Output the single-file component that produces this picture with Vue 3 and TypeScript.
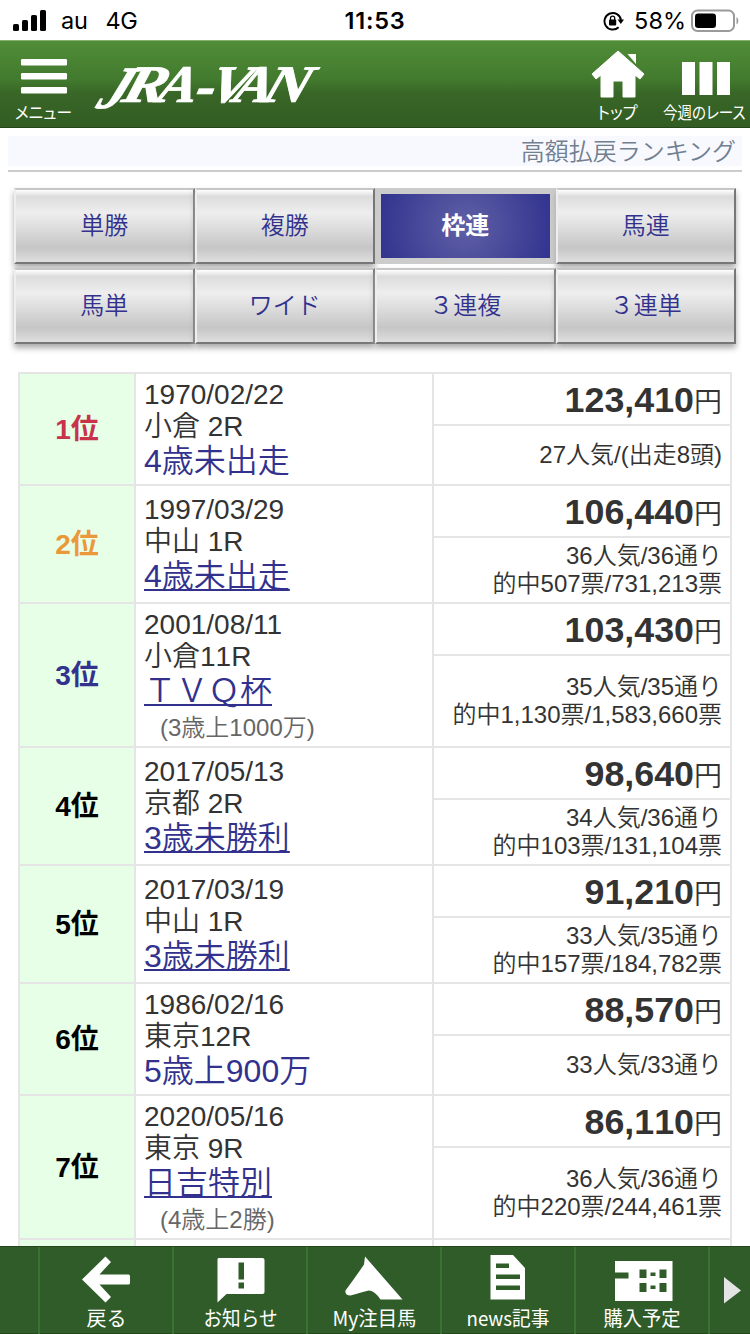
<script setup lang="ts">
interface Row {
  rank: number
  date: string
  place: string
  race: string
  link: boolean
  note?: string
  amount: string
  info: string[]
  size: 'short' | 'medium' | 'tall'
}

const tabs: string[] = ['単勝', '複勝', '枠連', '馬連', '馬単', 'ワイド', '３連複', '３連単']
const activeTab = '枠連'

const rows: Row[] = [
  { rank: 1, date: '1970/02/22', place: '小倉 2R', race: '4歳未出走', link: false, amount: '123,410', info: ['27人気/(出走8頭)'], size: 'short' },
  { rank: 2, date: '1997/03/29', place: '中山 1R', race: '4歳未出走', link: true, amount: '106,440', info: ['36人気/36通り', '的中507票/731,213票'], size: 'medium' },
  { rank: 3, date: '2001/08/11', place: '小倉11R', race: 'ＴＶＱ杯', link: true, note: '(3歳上1000万)', amount: '103,430', info: ['35人気/35通り', '的中1,130票/1,583,660票'], size: 'tall' },
  { rank: 4, date: '2017/05/13', place: '京都 2R', race: '3歳未勝利', link: true, amount: '98,640', info: ['34人気/36通り', '的中103票/131,104票'], size: 'medium' },
  { rank: 5, date: '2017/03/19', place: '中山 1R', race: '3歳未勝利', link: true, amount: '91,210', info: ['33人気/35通り', '的中157票/184,782票'], size: 'medium' },
  { rank: 6, date: '1986/02/16', place: '東京12R', race: '5歳上900万', link: false, amount: '88,570', info: ['33人気/33通り'], size: 'short' },
  { rank: 7, date: '2020/05/16', place: '東京 9R', race: '日吉特別', link: true, note: '(4歳上2勝)', amount: '86,110', info: ['36人気/36通り', '的中220票/244,461票'], size: 'tall' },
]
</script>

<template>
  <div class="screen">
    <div class="status">
      <div class="status-left">
        <svg class="signal" width="34" height="21" viewBox="0 0 34 21">
          <rect x="0" y="14" width="6" height="7" rx="1.6" />
          <rect x="9" y="10" width="6" height="11" rx="1.6" />
          <rect x="18" y="5" width="6" height="16" rx="1.6" />
          <rect x="27" y="0" width="6" height="21" rx="1.6" />
        </svg>
        <span class="carrier">au</span>
        <span class="network">4G</span>
      </div>
      <div class="clock">11:53</div>
      <div class="status-right">
        <svg width="21" height="20" viewBox="0 0 21 20">
          <path d="M15.600 16.200A8.300 8.300 0 1 1 18 9" fill="none" stroke="#000" stroke-width="1.900" />
          <path d="M14.600 8.600h6.400l-3.200 4.400z" />
          <rect x="6" y="8.600" width="7.200" height="5.800" rx="1" />
          <path d="M7.500 9V7.200a2.100 2.100 0 0 1 4.200 0V9" fill="none" stroke="#000" stroke-width="1.300" />
        </svg>
        <span class="percent">58%</span>
        <svg width="48" height="24" viewBox="0 0 48 24">
          <rect x="1" y="1.500" width="42" height="20.500" rx="5.500" fill="none" stroke="#9a9a9a" stroke-width="2" />
          <rect x="4" y="4.500" width="21" height="14.500" rx="3.200" />
          <path d="M45.500 8v7.500c2.400-1.400 2.400-6.100 0-7.500z" fill="#9a9a9a" />
        </svg>
      </div>
    </div>

    <header class="header">
      <svg class="menu" width="88" height="86" viewBox="0 0 88 86">
        <rect x="21" y="18" width="46" height="6.500" rx="1.200" />
        <rect x="21" y="32" width="46" height="6.500" rx="1.200" />
        <rect x="21" y="46" width="46" height="6.500" rx="1.200" />
        <text x="15" y="77.500" font-size="17" textLength="57" lengthAdjust="spacingAndGlyphs">メニュー</text>
      </svg>
      <svg class="logo" width="240" height="86" viewBox="0 0 240 86">
        <g transform="translate(0 61) skewX(-13)">
          <text class="logo-text" transform="translate(8 5.500) skewX(-12) scale(.95 1)" font-size="60">J</text>
          <text class="logo-text" transform="translate(32 0) skewX(-4) scale(1.24 1)" font-size="53">R</text>
          <text class="logo-text" transform="translate(68 0) scale(1.1 1)" font-size="53">A</text>
          <text class="logo-text" transform="translate(106 3) scale(1.08 1.1)" font-size="53">-</text>
          <text class="logo-text" transform="translate(118 0) skewX(-4) scale(1.14 1)" font-size="53">V</text>
          <text class="logo-text" transform="translate(144 0) scale(1.1 1)" font-size="53">A</text>
          <text class="logo-text" transform="translate(172 0) skewX(-7) scale(1.2 1)" font-size="53">N</text>
        </g>
      </svg>
      <svg class="home" width="82" height="86" viewBox="0 0 82 86">
        <path d="M38 10 64 33l-4 5-5-4v22H43V40H33v16H21V34l-5 4-4-5z" stroke="#fff" stroke-width="1" stroke-linejoin="round" />
        <path d="M47.500 13h8.500v10z" />
        <text x="17.500" y="77.500" font-size="17" textLength="40" lengthAdjust="spacingAndGlyphs">トップ</text>
      </svg>
      <svg class="races" width="90" height="86" viewBox="0 0 90 86">
        <rect x="22" y="21" width="13" height="33" />
        <rect x="39.500" y="21" width="13" height="33" />
        <rect x="57" y="21" width="13" height="33" />
        <text x="3" y="77.500" font-size="17" textLength="82.500" lengthAdjust="spacingAndGlyphs">今週のレース</text>
      </svg>
    </header>

    <h1 class="title">高額払戻ランキング</h1>

    <nav class="tabs">
      <div v-for="tab in tabs" :key="tab" class="tab" :class="{ active: tab === activeTab }">
        <span>{{ tab }}</span>
      </div>
    </nav>

    <section class="ranking">
      <div v-for="row in rows" :key="row.rank" class="row" :class="row.size">
        <div class="rank" :class="'rank-' + row.rank">{{ row.rank }}位</div>
        <div class="race">
          <div class="date">{{ row.date }}</div>
          <div class="place">{{ row.place }}</div>
          <div class="name"><span :class="{ link: row.link }">{{ row.race }}</span></div>
          <div v-if="row.note" class="note">{{ row.note }}</div>
        </div>
        <div class="payout">
          <div class="amount"><b>{{ row.amount }}</b>円</div>
          <div class="info">
            <div v-for="line in row.info" :key="line">{{ line }}</div>
          </div>
        </div>
      </div>
      <div class="row short">
        <div class="rank"></div>
        <div class="race"></div>
        <div class="payout"></div>
      </div>
    </section>

    <footer class="bottom">
      <div class="edge"></div>
      <svg class="item" viewBox="-1.500 0.500 134 87">
        <path d="M42.500 33 66 10l5.500 5.500L60 28h29q1.500 0 1.500 1.500v7q0 1.500-1.500 1.500H60L71.500 50.500 66 56z" />
        <text x="47" y="79.500" font-size="20" textLength="40" lengthAdjust="spacingAndGlyphs">戻る</text>
      </svg>
      <svg class="item" viewBox="-1.500 0.500 134 87">
        <path fill-rule="evenodd" d="M45 11.500h44q2 0 2 2v32q0 2-2 2H53L44 56V13q0-1.500 1-1.500zM65 16h5.500v17H65zM65 36h5.500v6H65z" />
        <text x="30" y="79.500" font-size="20" textLength="74" lengthAdjust="spacingAndGlyphs">お知らせ</text>
      </svg>
      <svg class="item" viewBox="-1.500 0.500 134 87">
        <path d="M57.500 10 95 53H73q-6-9-12-9-4 1-18 5-6 0-5-5Q47 32 56.500 18z" />
        <text x="25" y="79.500" font-size="20" textLength="84" lengthAdjust="spacingAndGlyphs">My注目馬</text>
      </svg>
      <svg class="item" viewBox="-1.500 0.500 134 87">
        <path fill-rule="evenodd" d="M49 8.500H71.500l12 13v31.500H49zM54.500 17v4.500h13V17zM54.500 28v4.500h24V28zM54.500 39v4.500h24V39z" />
        <text x="25" y="79.500" font-size="20" textLength="83" lengthAdjust="spacingAndGlyphs">news記事</text>
      </svg>
      <svg class="item" viewBox="-1.500 0.500 134 87">
        <path fill-rule="evenodd" d="M39.500 14.500H97v40H39.500V32H53v-6H39.500zM64 23v8.500h7V23zM84 23v8.500h7V23zM64 36.500v9h7v-9zM84 36.500v9h7v-9zM75 26v3.500h5V26zM75 39v3.500h5V39z" />
        <text x="28" y="79.500" font-size="20" textLength="77" lengthAdjust="spacingAndGlyphs">購入予定</text>
      </svg>
      <svg class="more" viewBox="0 0 42 87">
        <path d="M16 30 33 43.500 16 56.500z" fill="#e4e4e4" />
      </svg>
    </footer>
  </div>
</template>

<style>
body {
  margin: 0;
}
</style>

<style scoped>
.screen {
  width: 750px;
  height: 1334px;
  display: flex;
  flex-direction: column;
  overflow: hidden;
  background: #fff;
  color: #333;
  font-family: "Liberation Sans", "Noto Sans CJK JP", sans-serif;
  font-weight: 350;
}

.status {
  height: 40px;
  flex: none;
  display: grid;
  grid-template-columns: 1fr auto 1fr;
  align-items: center;
  padding: 0 11px 0 13px;
  box-sizing: border-box;
  color: #000;
  font: 400 23.500px/40px Inter, sans-serif;
}

.status-left,
.status-right {
  display: flex;
  align-items: center;
}

.status-left span,
.percent {
  padding-top: 1px;
}

.status-right {
  justify-content: flex-end;
}

.signal {
  margin-top: -1px;
}

.carrier {
  margin: 0 18px 0 14px;
  letter-spacing: -0.300px;
}

.network {
  letter-spacing: -0.500px;
}

.clock {
  margin-right: 2px;
  font-weight: 600;
  letter-spacing: 0.800px;
}

.percent {
  margin: 0 5px 0 10px;
}

.header {
  height: 88px;
  flex: none;
  display: flex;
  box-sizing: border-box;
  border-top: 1px solid #86b26e;
  border-bottom: 1px solid #234719;
  background: linear-gradient(#508d37, #427a2e 45%, #396727 60%, #325c23);
}

.header svg,
.bottom svg {
  flex: none;
  overflow: visible;
  fill: #fff;
  font-family: "Noto Sans CJK JP", sans-serif;
  font-weight: 400;
}

.header text {
  font-feature-settings: "palt";
}

.header .logo-text {
  font-family: "Liberation Serif", serif;
  font-style: italic;
  font-weight: 700;
  stroke: #fff;
  stroke-width: 0.7px;
}

.home {
  margin-left: 252px;
}

.races {
  margin-left: -2px;
}

.title {
  flex: none;
  height: 30px;
  margin: 8px 8px 0;
  padding-right: 6px;
  background: #f8f8ff;
  box-shadow: 0 4px #fff, 0 6px #ccc;
  color: #708090;
  text-align: right;
  font-size: 24px;
  line-height: 31px;
  font-weight: 350;
}

.tabs {
  flex: none;
  display: grid;
  grid-template-columns: repeat(4, 1fr);
  row-gap: 4px;
  margin: 22px 14px 0;
}

.tab {
  height: 76px;
  box-sizing: border-box;
  display: flex;
  align-items: center;
  justify-content: center;
  border: 2px solid;
  border-color: #c6c6c6 #777 #777 #eee;
  background: linear-gradient(#fff, #dcdcdc 9%, #eee 32%, #c6c6c6 80%, #dedede);
  box-shadow: 0 4px 6px #aaa;
  color: #32328e;
  font-size: 24px;
  line-height: 36px;
}

.tab.active {
  border: 6px solid #ccc;
  background: radial-gradient(circle 92px, #6060a6, #30328e) padding-box;
  box-shadow: none;
  color: #fff;
  font-weight: 700;
}

.ranking {
  flex: none;
  width: 714px;
  box-sizing: border-box;
  margin: 28px 0 0 18px;
  height: 874px;
  overflow: hidden;
  border: solid #e5e5e5;
  border-width: 2px 2px 0;
}

.row {
  display: grid;
  grid-template-columns: 116px 298px 296px;
  box-sizing: border-box;
  border-bottom: 2px solid #e5e5e5;
}

.short {
  height: 112px;
}

.medium {
  height: 118px;
}

.tall {
  height: 144px;
}

.rank {
  display: flex;
  align-items: center;
  justify-content: center;
  padding-bottom: 5px;
  border-right: 2px solid #e5e5e5;
  background: #e6ffe6;
  color: #000;
  font-size: 28px;
  font-weight: 700;
}

.rank-1 {
  color: #c8324a;
}

.rank-2 {
  color: #eb983a;
}

.rank-3 {
  color: #32328e;
}

.race {
  display: flex;
  flex-direction: column;
  justify-content: center;
  padding: 0 8px;
  border-right: 2px solid #e5e5e5;
}

.date,
.place {
  font-size: 28px;
  line-height: 32px;
}

.place {
  font-kerning: none;
}

.name {
  color: #32328e;
  font-size: 32px;
  line-height: 36px;
}

.link {
  text-decoration: underline 2px;
  text-underline-offset: 2px;
  text-decoration-skip-ink: none;
}

.note {
  margin-bottom: -4px;
  padding-left: 16px;
  color: #666;
  font-size: 24px;
  line-height: 37px;
}

.payout {
  display: flex;
  flex-direction: column;
  text-align: right;
}

.amount {
  height: 50px;
  padding-right: 8px;
  border-bottom: 2px solid #e5e5e5;
  font-size: 28px;
  line-height: 52px;
  font-kerning: none;
}

.amount b {
  font-size: 35.800px;
  font-weight: 700;
}

.info {
  flex: 1;
  display: flex;
  flex-direction: column;
  justify-content: center;
  padding-right: 8px;
  font-size: 24px;
  line-height: 28px;
}

.bottom {
  flex: none;
  height: 88px;
  box-sizing: border-box;
  display: flex;
  border-top: 1px solid #234719;
  border-bottom: 1px solid #234719;
  background: #2f5c29;
}

.edge {
  width: 38px;
}

.bottom .item {
  width: 134px;
  height: 87px;
  box-shadow: inset 2px 0 #3b7234;
}

.bottom .more {
  width: 42px;
  height: 87px;
  box-shadow: inset 2px 0 #3b7234;
}
</style>
